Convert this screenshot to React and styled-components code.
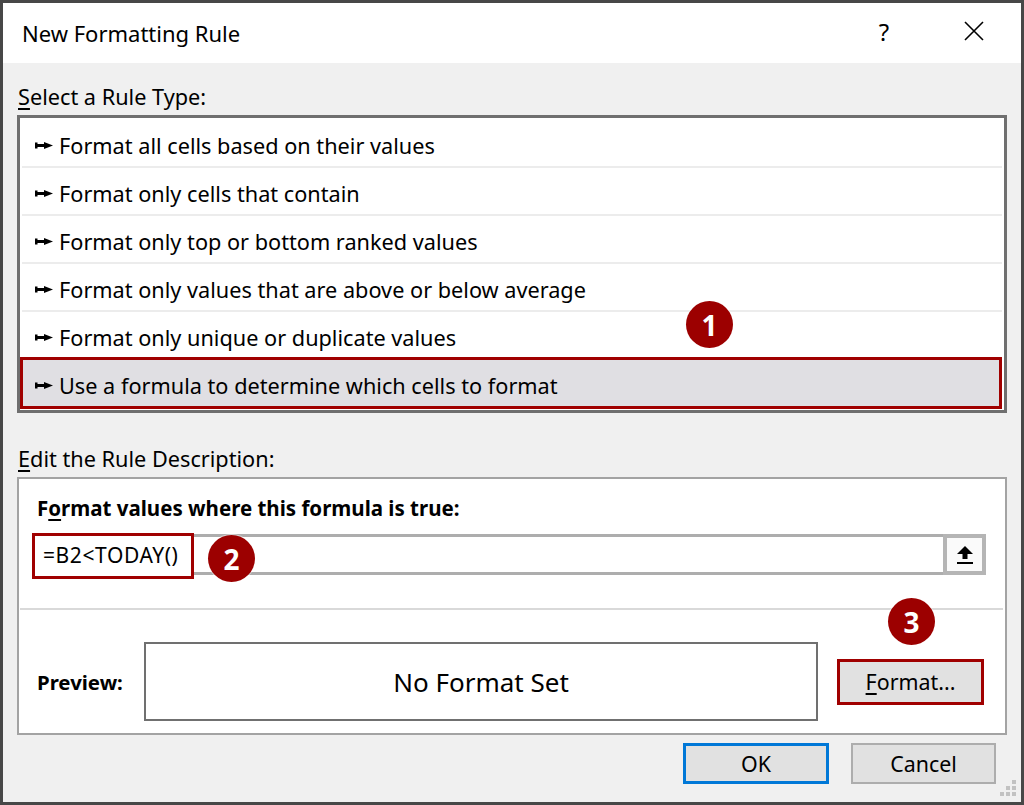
import React from "react";
import styled, { createGlobalStyle } from "styled-components";

const GlobalStyle = createGlobalStyle`
  html, body {
    margin: 0;
    padding: 0;
    background: #ffffff;
  }
`;

const Dialog = styled.div`
  position: relative;
  width: 1024px;
  height: 805px;
  box-sizing: border-box;
  border: 3px solid #474747;
  display: flex;
  flex-direction: column;
  background: #f0f0f0;
  font-family: "Noto Sans", "Open Sans", sans-serif;
  color: #000;
`;

const TitleBar = styled.div`
  height: 60px;
  background: #fff;
  display: flex;
  align-items: center;
  padding-left: 19px;
`;

const Title = styled.div`
  font-size: 22px;
`;

const TitleButtons = styled.div`
  margin-left: auto;
  display: flex;
  align-items: center;
  gap: 30px;
  padding-right: 17px;
`;

const TitleButton = styled.div`
  width: 60px;
  height: 40px;
  display: flex;
  align-items: center;
  justify-content: center;
  font-size: 24px;
  padding-bottom: 4px;
  box-sizing: border-box;
`;

const Body = styled.div`
  flex: 1;
  display: flex;
  flex-direction: column;
  padding: 0 14px;
`;

const SectionLabel = styled.div`
  font-size: 21.7px;
  line-height: 24px;
  padding-left: 1px;
  margin-top: ${(p) => p.$top}px;
  margin-bottom: 6px;
`;

const Key = styled.span`
  text-decoration: underline;
  text-underline-offset: 3px;
`;

const RuleList = styled.div`
  border: 3px solid #6f6f6f;
  background: #fff;
  padding: 2px 0 1px 0;
  display: flex;
  flex-direction: column;
`;

const RuleRow = styled.div`
  display: flex;
  align-items: center;
  gap: 6px;
  box-sizing: border-box;
  height: ${(p) => (p.$selected ? 52 : p.$last ? 45 : 48)}px;
  margin: ${(p) => (p.$selected ? "0 2px 0 0" : "0 2px")};
  padding: 5px 0 0 ${(p) => (p.$selected ? 12 : 13)}px;
  font-size: 21.7px;
  border-bottom: ${(p) => (p.$last || p.$selected ? "none" : "2px solid #ececec")};
  ${(p) =>
    p.$selected &&
    `
    background: #e0dfe3;
    border: 3px solid #a00000;
  `}
`;

const DescBox = styled.div`
  height: 258px;
  box-sizing: border-box;
  border: 2px solid #a3a3a3;
  background: #fff;
  display: flex;
  flex-direction: column;
  padding: 17px 0 0 0;
`;

const BoldLabel = styled.div`
  font-size: 20.5px;
  line-height: 24px;
  font-weight: 700;
  padding-left: 18px;
`;

const FormulaInput = styled.div`
  margin: 14px 19px 0 14px;
  height: 41px;
  box-sizing: border-box;
  border: 3px solid #adadad;
  display: flex;
  align-items: stretch;
`;

const FormulaHighlight = styled.div`
  width: 162px;
  box-sizing: border-box;
  margin: -4px 0 -7px -4px;
  border: 3px solid #a00000;
  background: #fff;
  display: flex;
  align-items: center;
  padding: 0 0 2px 8px;
  font-size: 21px;
  letter-spacing: 0.6px;
  white-space: nowrap;
`;

const CollapseButton = styled.div`
  margin: -3px -3px -3px auto;
  width: 43px;
  box-sizing: border-box;
  border: 4px solid #b5b5b5;
  background: #fafafa;
  display: flex;
  align-items: center;
  justify-content: center;
`;

const Divider = styled.div`
  height: 2px;
  background: #d9d9d9;
  margin: 33px 2px 0 1px;
`;

const PreviewRow = styled.div`
  display: flex;
  align-items: center;
  margin-top: 32px;
  padding-left: 18px;
`;

const PreviewLabel = styled.div`
  width: 107px;
  font-size: 20.4px;
  font-weight: 700;
`;

const PreviewBox = styled.div`
  width: 674px;
  height: 79px;
  box-sizing: border-box;
  border: 2px solid #707070;
  display: flex;
  align-items: center;
  justify-content: center;
  font-size: 26px;
`;

const Button = styled.div`
  box-sizing: border-box;
  width: ${(p) => p.$w}px;
  height: ${(p) => p.$h}px;
  border: ${(p) => p.$border};
  background: #e1e1e1;
  display: flex;
  align-items: center;
  justify-content: center;
  font-size: 21.4px;
`;

const FormatButton = styled(Button)`
  margin-left: 19px;
`;

const Footer = styled.div`
  display: flex;
  justify-content: flex-end;
  gap: 22px;
  margin: 8px 11px 0 0;
`;

const Badge = styled.div`
  position: absolute;
  left: ${(p) => p.$x}px;
  top: ${(p) => p.$y}px;
  width: 47px;
  height: 47px;
  border-radius: 50%;
  background: #9c0000;
  color: #fff;
  font-family: "Open Sans", "Noto Sans", sans-serif;
  font-size: 28px;
  font-weight: 700;
  display: flex;
  align-items: center;
  justify-content: center;
  box-shadow: 0 0 0 1px rgba(255, 255, 255, 0.5);
`;

const Grip = styled.svg`
  position: absolute;
  right: 5px;
  bottom: 6px;
`;

const RuleArrow = () => (
  <svg width="18" height="7" viewBox="0 0 18 7">
    <rect x="0" y="0.5" width="2.5" height="6" fill="#000" />
    <rect x="0" y="2" width="11" height="3" fill="#000" />
    <polygon points="9,0 18,3.5 9,7" fill="#000" />
  </svg>
);

const CloseIcon = () => (
  <svg width="20" height="20" viewBox="0 0 20 20">
    <path d="M1 1 L19 19 M19 1 L1 19" stroke="#000" strokeWidth="1.6" fill="none" />
  </svg>
);

const CollapseIcon = () => (
  <svg width="18" height="20" viewBox="0 0 18 20">
    <polygon points="9,1 17,9 11.5,9 11.5,14 6.5,14 6.5,9 1,9" fill="#000" />
    <rect x="1" y="17" width="16" height="2" fill="#000" />
  </svg>
);

const rules = [
  "Format all cells based on their values",
  "Format only cells that contain",
  "Format only top or bottom ranked values",
  "Format only values that are above or below average",
  "Format only unique or duplicate values",
  "Use a formula to determine which cells to format",
];

export default function App() {
  return (
    <>
      <GlobalStyle />
      <Dialog>
        <TitleBar>
          <Title>New Formatting Rule</Title>
          <TitleButtons>
            <TitleButton>?</TitleButton>
            <TitleButton>
              <CloseIcon />
            </TitleButton>
          </TitleButtons>
        </TitleBar>
        <Body>
          <SectionLabel $top={22}>
            <Key>S</Key>elect a Rule Type:
          </SectionLabel>
          <RuleList>
            {rules.map((r, i) => (
              <RuleRow key={r} $last={i === 4} $selected={i === 5}>
                <RuleArrow />
                {r}
              </RuleRow>
            ))}
          </RuleList>
          <SectionLabel $top={34}>
            <Key>E</Key>dit the Rule Description:
          </SectionLabel>
          <DescBox>
            <BoldLabel>
              F<Key>o</Key>rmat values where this formula is true:
            </BoldLabel>
            <FormulaInput>
              <FormulaHighlight>=B2&lt;TODAY()</FormulaHighlight>
              <CollapseButton>
                <CollapseIcon />
              </CollapseButton>
            </FormulaInput>
            <Divider />
            <PreviewRow>
              <PreviewLabel>Preview:</PreviewLabel>
              <PreviewBox>No Format Set</PreviewBox>
              <FormatButton $w={147} $h={46} $border="3px solid #a00000">
                <span>
                  <Key>F</Key>ormat...
                </span>
              </FormatButton>
            </PreviewRow>
          </DescBox>
          <Footer>
            <Button $w={146} $h={41} $border="3px solid #0078d7">
              OK
            </Button>
            <Button $w={145} $h={41} $border="2px solid #adadad">
              Cancel
            </Button>
          </Footer>
        </Body>
        <Badge $x={683} $y={298}>1</Badge>
        <Badge $x={205} $y={532}>2</Badge>
        <Badge $x={885} $y={595}>3</Badge>
        <Grip width="16" height="16" viewBox="0 0 16 16">
          <rect x="12" y="0" width="4" height="4" fill="#c2c2c2" />
          <rect x="6" y="6" width="4" height="4" fill="#c2c2c2" />
          <rect x="12" y="6" width="4" height="4" fill="#c2c2c2" />
          <rect x="0" y="12" width="4" height="4" fill="#c2c2c2" />
          <rect x="6" y="12" width="4" height="4" fill="#c2c2c2" />
          <rect x="12" y="12" width="4" height="4" fill="#c2c2c2" />
        </Grip>
      </Dialog>
    </>
  );
}
